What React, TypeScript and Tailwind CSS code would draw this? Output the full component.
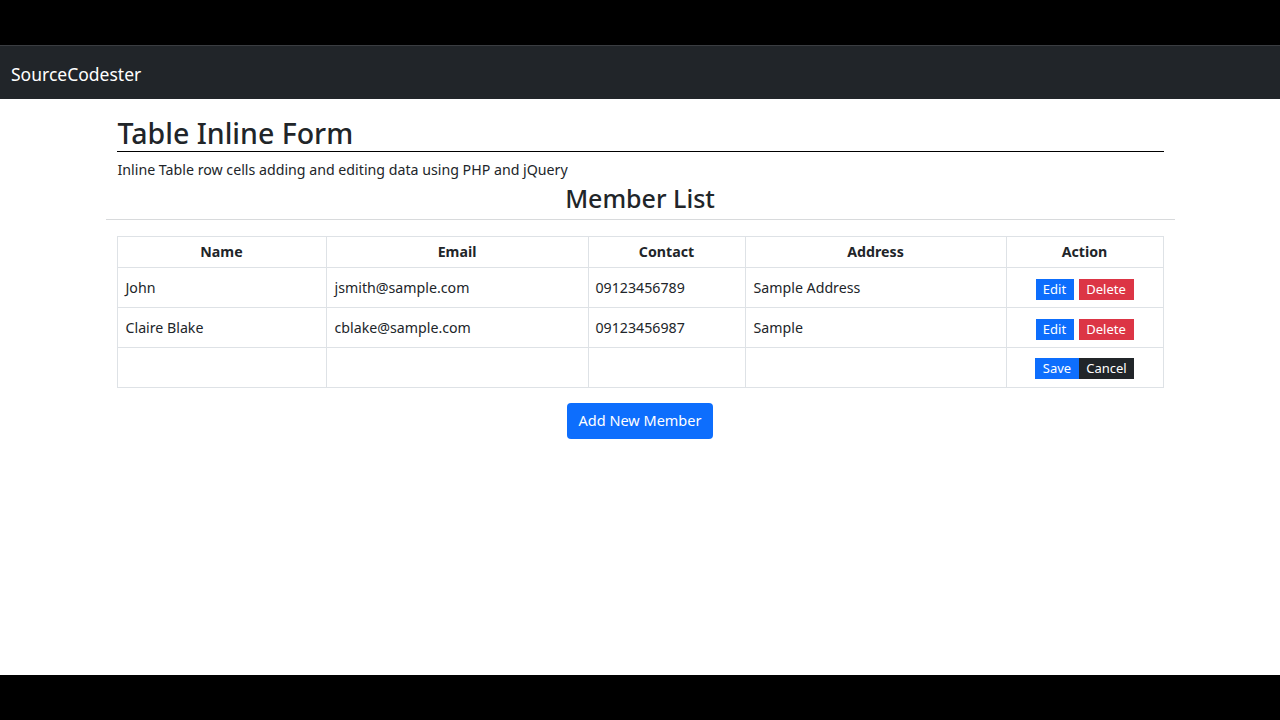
import React from "react";

const rows = [
  { name: "John", email: "jsmith@sample.com", contact: "09123456789", address: "Sample Address" },
  { name: "Claire Blake", email: "cblake@sample.com", contact: "09123456987", address: "Sample" },
];

export default function App() {
  return (
    <div
      className="w-[1280px] h-[720px] bg-black flex flex-col text-[#212529]"
      style={{ fontFamily: '"Noto Sans", "Open Sans", sans-serif' }}
    >
      <div className="h-[45px] bg-black" />
      <div className="h-[54px] bg-[#212529] border-t border-[#3a3d41] flex items-center px-[11px] pt-[3px]">
        <span className="text-white text-[17.5px]">SourceCodester</span>
      </div>
      <div className="flex-1 bg-white flex flex-col items-center">
        <div className="w-[1069px] flex flex-col">
          <div className="px-[11px]">
            <div className="border-b border-black mt-[16px] pl-[1px]">
              <h1 className="text-[28.5px] leading-[36px] font-medium">Table Inline Form</h1>
            </div>
            <p className="text-[14.2px] leading-[22px] mt-[7px] pl-[1px]">
              Inline Table row cells adding and editing data using PHP and jQuery
            </p>
          </div>
          <h2 className="text-center text-[25px] leading-[30px] font-medium mt-[2px]">Member List</h2>
          <hr className="border-t border-[#d8dadc] mt-[6px]" />
          <div className="px-[11px] mt-[16px]">
            <table className="w-full border-collapse text-[14.2px]">
              <thead>
                <tr className="h-[31px]">
                  <th className="border border-[#dee2e6] w-[209px] font-bold">Name</th>
                  <th className="border border-[#dee2e6] w-[262px] font-bold">Email</th>
                  <th className="border border-[#dee2e6] w-[157px] font-bold">Contact</th>
                  <th className="border border-[#dee2e6] w-[261px] font-bold">Address</th>
                  <th className="border border-[#dee2e6] font-bold">Action</th>
                </tr>
              </thead>
              <tbody>
                {rows.map((r) => (
                  <tr key={r.name} className="h-[40px]">
                    <td className="border border-[#dee2e6] px-[8px]">{r.name}</td>
                    <td className="border border-[#dee2e6] px-[8px]">{r.email}</td>
                    <td className="border border-[#dee2e6] px-[7px]">{r.contact}</td>
                    <td className="border border-[#dee2e6] px-[8px]">{r.address}</td>
                    <td className="border border-[#dee2e6]">
                      <div className="flex justify-center gap-[5px] pt-[3px]">
                        <button className="bg-[#0d6efd] text-white text-[13px] leading-[21px] h-[21px] w-[38px]">Edit</button>
                        <button className="bg-[#dc3545] text-white text-[13px] leading-[21px] h-[21px] w-[55px]">Delete</button>
                      </div>
                    </td>
                  </tr>
                ))}
                <tr className="h-[40px]">
                  <td className="border border-[#dee2e6]"></td>
                  <td className="border border-[#dee2e6]"></td>
                  <td className="border border-[#dee2e6]"></td>
                  <td className="border border-[#dee2e6]"></td>
                  <td className="border border-[#dee2e6]">
                    <div className="flex justify-center pt-[2px]">
                      <button className="bg-[#0d6efd] text-white text-[13px] leading-[21px] h-[21px] w-[44px]">Save</button>
                      <button className="bg-[#212529] text-white text-[13px] leading-[21px] h-[21px] w-[55px]">Cancel</button>
                    </div>
                  </td>
                </tr>
              </tbody>
            </table>
          </div>
          <div className="flex justify-center mt-[15px]">
            <button className="bg-[#0d6efd] text-white text-[14.5px] h-[36px] w-[146px] rounded-[4px]">
              Add New Member
            </button>
          </div>
        </div>
      </div>
      <div className="h-[45px] bg-black" />
    </div>
  );
}
